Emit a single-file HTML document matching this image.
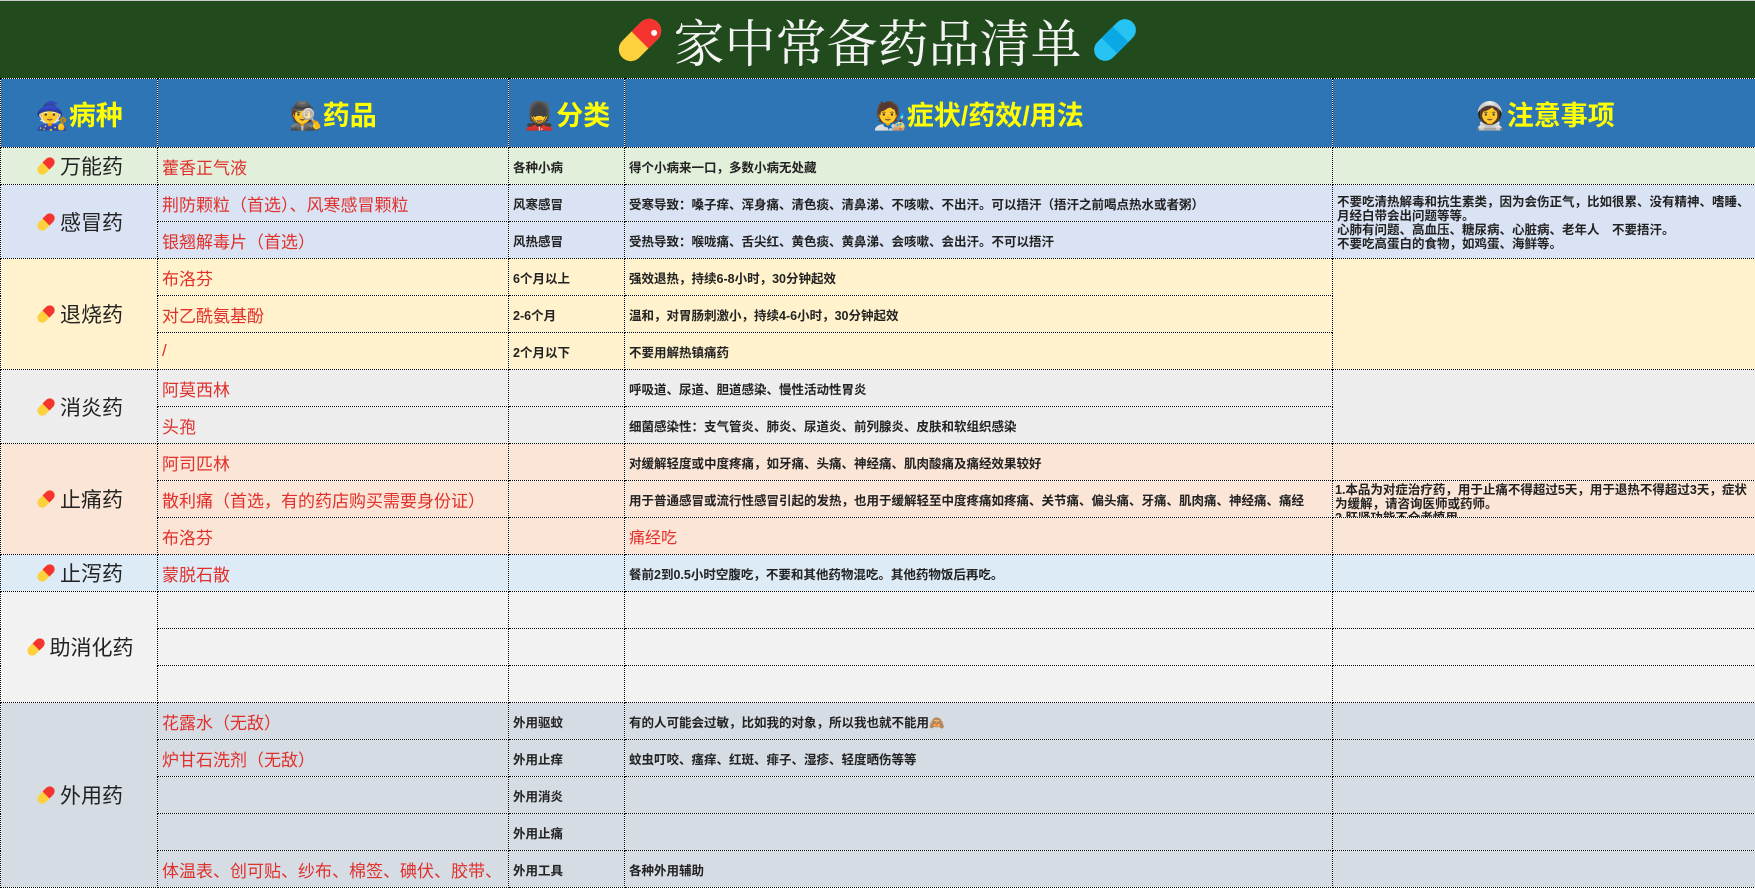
<!DOCTYPE html>
<html><head><meta charset="utf-8"><style>
*{margin:0;padding:0;box-sizing:border-box}
body{width:1755px;height:889px;overflow:hidden;background:#fff;font-family:"Liberation Sans","Noto Sans CJK SC",sans-serif}
.title{position:absolute;left:0;top:0;width:1755px;height:78px;background:#214a1d;color:#f4f4f4;font-family:"Liberation Serif","Noto Serif CJK SC",serif;font-size:51px;display:flex;align-items:center;justify-content:center;gap:6px;border-top:1px solid #ccc}
table{position:absolute;left:0;top:78px;border-collapse:collapse;table-layout:fixed;width:1755px}
td{border:1px dotted #000;height:37px;padding:0 4px;vertical-align:middle;overflow:hidden;white-space:nowrap}
tr.h td{height:69px;background:#2e75b6;color:#ffff00;font-weight:bold;font-size:27px;text-align:center}
.d{text-align:center;font-size:21px;color:#222}
.m{color:#e0302c;font-size:17px;font-weight:normal}
.s{font-size:12.5px;color:#222;font-weight:bold}
.n{font-size:12.5px;color:#222;font-weight:bold;white-space:normal;line-height:14px}
.pill{display:inline-block;vertical-align:-3px;margin-right:3px}
.g td{background:#e2efda}.b td{background:#dae3f3}.y td{background:#fff2cc}.e td{background:#ededed}
.o td{background:#fbe5d6}.l td{background:#ddebf7}.f td{background:#f2f2f2}.w td{background:#d6dce4}
.clip{height:35px;overflow:hidden;padding-top:1px}
</style></head><body>
<div class="title">
<svg width="54" height="54" viewBox="0 0 54 54"><g transform="rotate(45 27 27)"><rect x="15" y="2" width="24" height="50" rx="12" fill="#fdd13d"/><path d="M15 27V14a12 12 0 0 1 24 0v13z" fill="#f5332f"/><circle cx="32" cy="12" r="3" fill="#fff"/></g></svg>
<span>家中常备药品清单</span>
<svg width="54" height="54" viewBox="0 0 54 54"><g transform="rotate(45 27 27)"><rect x="16" y="2" width="22" height="50" rx="11" fill="#27c3f3"/><rect x="16" y="19" width="22" height="16" fill="#0ba8e6"/></g></svg>
</div>
<table>
<colgroup><col style="width:157px"><col style="width:351px"><col style="width:116px"><col style="width:708px"><col style="width:423px"></colgroup>
<tr class="h"><td>🧙病种</td><td>🕵药品</td><td>💂分类</td><td>🧑‍🎨症状/药效/用法</td><td>👩‍🚀注意事项</td></tr>
<tr class="g"><td class="d"><svg class="pill" width="22" height="22" viewBox="0 0 54 54"><g transform="rotate(45 27 27)"><rect x="15" y="2" width="24" height="50" rx="12" fill="#fdd13d"/><path d="M15 27V14a12 12 0 0 1 24 0v13z" fill="#f5332f"/></g></svg>万能药</td><td class="m">藿香正气液</td><td class="s">各种小病</td><td class="s">得个小病来一口，多数小病无处藏</td><td></td></tr>
<tr class="b"><td class="d" rowspan="2"><svg class="pill" width="22" height="22" viewBox="0 0 54 54"><g transform="rotate(45 27 27)"><rect x="15" y="2" width="24" height="50" rx="12" fill="#fdd13d"/><path d="M15 27V14a12 12 0 0 1 24 0v13z" fill="#f5332f"/></g></svg>感冒药</td><td class="m">荆防颗粒（首选）、风寒感冒颗粒</td><td class="s">风寒感冒</td><td class="s">受寒导致：嗓子痒、浑身痛、清色痰、清鼻涕、不咳嗽、不出汗。可以捂汗（捂汗之前喝点热水或者粥）</td><td rowspan="2" class="n" style="padding-top:2px">不要吃清热解毒和抗生素类，因为会伤正气，比如很累、没有精神、嗜睡、月经白带会出问题等等。<br>心肺有问题、高血压、糖尿病、心脏病、老年人　不要捂汗。<br>不要吃高蛋白的食物，如鸡蛋、海鲜等。</td></tr>
<tr class="b"><td class="m">银翘解毒片（首选）</td><td class="s">风热感冒</td><td class="s">受热导致：喉咙痛、舌尖红、黄色痰、黄鼻涕、会咳嗽、会出汗。不可以捂汗</td></tr>
<tr class="y"><td class="d" rowspan="3"><svg class="pill" width="22" height="22" viewBox="0 0 54 54"><g transform="rotate(45 27 27)"><rect x="15" y="2" width="24" height="50" rx="12" fill="#fdd13d"/><path d="M15 27V14a12 12 0 0 1 24 0v13z" fill="#f5332f"/></g></svg>退烧药</td><td class="m">布洛芬</td><td class="s">6个月以上</td><td class="s">强效退热，持续6-8小时，30分钟起效</td><td rowspan="3"></td></tr>
<tr class="y"><td class="m">对乙酰氨基酚</td><td class="s">2-6个月</td><td class="s">温和，对胃肠刺激小，持续4-6小时，30分钟起效</td></tr>
<tr class="y"><td class="m">/</td><td class="s">2个月以下</td><td class="s">不要用解热镇痛药</td></tr>
<tr class="e"><td class="d" rowspan="2"><svg class="pill" width="22" height="22" viewBox="0 0 54 54"><g transform="rotate(45 27 27)"><rect x="15" y="2" width="24" height="50" rx="12" fill="#fdd13d"/><path d="M15 27V14a12 12 0 0 1 24 0v13z" fill="#f5332f"/></g></svg>消炎药</td><td class="m">阿莫西林</td><td></td><td class="s">呼吸道、尿道、胆道感染、慢性活动性胃炎</td><td rowspan="2"></td></tr>
<tr class="e"><td class="m">头孢</td><td></td><td class="s">细菌感染性：支气管炎、肺炎、尿道炎、前列腺炎、皮肤和软组织感染</td></tr>
<tr class="o"><td class="d" rowspan="3"><svg class="pill" width="22" height="22" viewBox="0 0 54 54"><g transform="rotate(45 27 27)"><rect x="15" y="2" width="24" height="50" rx="12" fill="#fdd13d"/><path d="M15 27V14a12 12 0 0 1 24 0v13z" fill="#f5332f"/></g></svg>止痛药</td><td class="m">阿司匹林</td><td></td><td class="s">对缓解轻度或中度疼痛，如牙痛、头痛、神经痛、肌肉酸痛及痛经效果较好</td><td></td></tr>
<tr class="o"><td class="m">散利痛（首选，有的药店购买需要身份证）</td><td></td><td class="s">用于普通感冒或流行性感冒引起的发热，也用于缓解轻至中度疼痛如疼痛、关节痛、偏头痛、牙痛、肌肉痛、神经痛、痛经</td><td class="n" style="padding:0 2px"><div class="clip">1.本品为对症治疗药，用于止痛不得超过5天，用于退热不得超过3天，症状为缓解，请咨询医师或药师。<br>2.肝肾功能不全者慎用。</div></td></tr>
<tr class="o"><td class="m">布洛芬</td><td></td><td class="m" style="font-size:16px">痛经吃</td><td></td></tr>
<tr class="l"><td class="d"><svg class="pill" width="22" height="22" viewBox="0 0 54 54"><g transform="rotate(45 27 27)"><rect x="15" y="2" width="24" height="50" rx="12" fill="#fdd13d"/><path d="M15 27V14a12 12 0 0 1 24 0v13z" fill="#f5332f"/></g></svg>止泻药</td><td class="m">蒙脱石散</td><td></td><td class="s">餐前2到0.5小时空腹吃，不要和其他药物混吃。其他药物饭后再吃。</td><td></td></tr>
<tr class="f"><td class="d" rowspan="3"><svg class="pill" width="22" height="22" viewBox="0 0 54 54"><g transform="rotate(45 27 27)"><rect x="15" y="2" width="24" height="50" rx="12" fill="#fdd13d"/><path d="M15 27V14a12 12 0 0 1 24 0v13z" fill="#f5332f"/></g></svg>助消化药</td><td></td><td></td><td></td><td></td></tr>
<tr class="f"><td></td><td></td><td></td><td></td></tr>
<tr class="f"><td></td><td></td><td></td><td></td></tr>
<tr class="w"><td class="d" rowspan="5"><svg class="pill" width="22" height="22" viewBox="0 0 54 54"><g transform="rotate(45 27 27)"><rect x="15" y="2" width="24" height="50" rx="12" fill="#fdd13d"/><path d="M15 27V14a12 12 0 0 1 24 0v13z" fill="#f5332f"/></g></svg>外用药</td><td class="m">花露水（无敌）</td><td class="s">外用驱蚊</td><td class="s">有的人可能会过敏，比如我的对象，所以我也就不能用🙈</td><td></td></tr>
<tr class="w"><td class="m">炉甘石洗剂（无敌）</td><td class="s">外用止痒</td><td class="s">蚊虫叮咬、瘙痒、红斑、痱子、湿疹、轻度晒伤等等</td><td></td></tr>
<tr class="w"><td></td><td class="s">外用消炎</td><td></td><td></td></tr>
<tr class="w"><td></td><td class="s">外用止痛</td><td></td><td></td></tr>
<tr class="w"><td class="m">体温表、创可贴、纱布、棉签、碘伏、胶带、</td><td class="s">外用工具</td><td class="s">各种外用辅助</td><td></td></tr>
</table>
</body></html>
